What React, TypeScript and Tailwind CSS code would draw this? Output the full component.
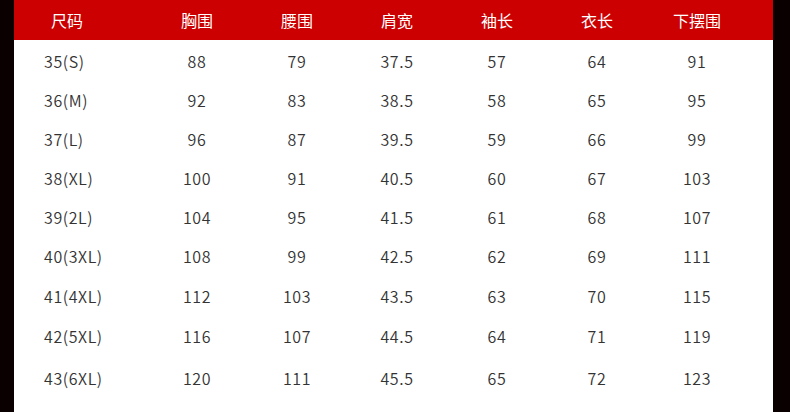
const headers = ["尺码", "胸围", "腰围", "肩宽", "袖长", "衣长", "下摆围"];

const rows: string[][] = [
  ["35(S)", "88", "79", "37.5", "57", "64", "91"],
  ["36(M)", "92", "83", "38.5", "58", "65", "95"],
  ["37(L)", "96", "87", "39.5", "59", "66", "99"],
  ["38(XL)", "100", "91", "40.5", "60", "67", "103"],
  ["39(2L)", "104", "95", "41.5", "61", "68", "107"],
  ["40(3XL)", "108", "99", "42.5", "62", "69", "111"],
  ["41(4XL)", "112", "103", "43.5", "63", "70", "115"],
  ["42(5XL)", "116", "107", "44.5", "64", "71", "119"],
  ["43(6XL)", "120", "111", "45.5", "65", "72", "123"],
];

// row heights drift slightly taller towards the bottom in the original
const rowHeights = ["h-[39px]", "h-[39px]", "h-[39px]", "h-[39px]", "h-[39px]", "h-[40px]", "h-[40px]", "h-[40px]", "h-[44px]"];

const font = { fontFamily: '"Noto Sans CJK SC", "Noto Sans", sans-serif' };

export default function App() {
  return (
    <div className="w-[790px] h-[412px] bg-[#0a0000] flex overflow-hidden" style={font}>
      <div className="ml-[14px] w-[759px] h-full bg-white flex flex-col">
        {/* Header bar */}
        <div className="h-[40px] bg-[#cc0000] grid grid-cols-[133px_repeat(6,100px)] items-center text-white text-[16px]">
          {headers.map((h, i) => (
            <div key={h} className={i === 0 ? "pl-[37px]" : "text-center"}>
              {h}
            </div>
          ))}
        </div>

        {/* Rows */}
        <div className="pt-[1px] flex flex-col">
          {rows.map((r, ri) => (
            <div
              key={r[0]}
              className={`${rowHeights[ri]} grid grid-cols-[133px_repeat(6,100px)] items-center text-[#333333] text-[16px] font-[350] tracking-[0.6px]`}
            >
              {r.map((c, i) => (
                <div key={i} className={i === 0 ? "pl-[30px]" : "text-center"}>
                  {c}
                </div>
              ))}
            </div>
          ))}
        </div>
      </div>
    </div>
  );
}
